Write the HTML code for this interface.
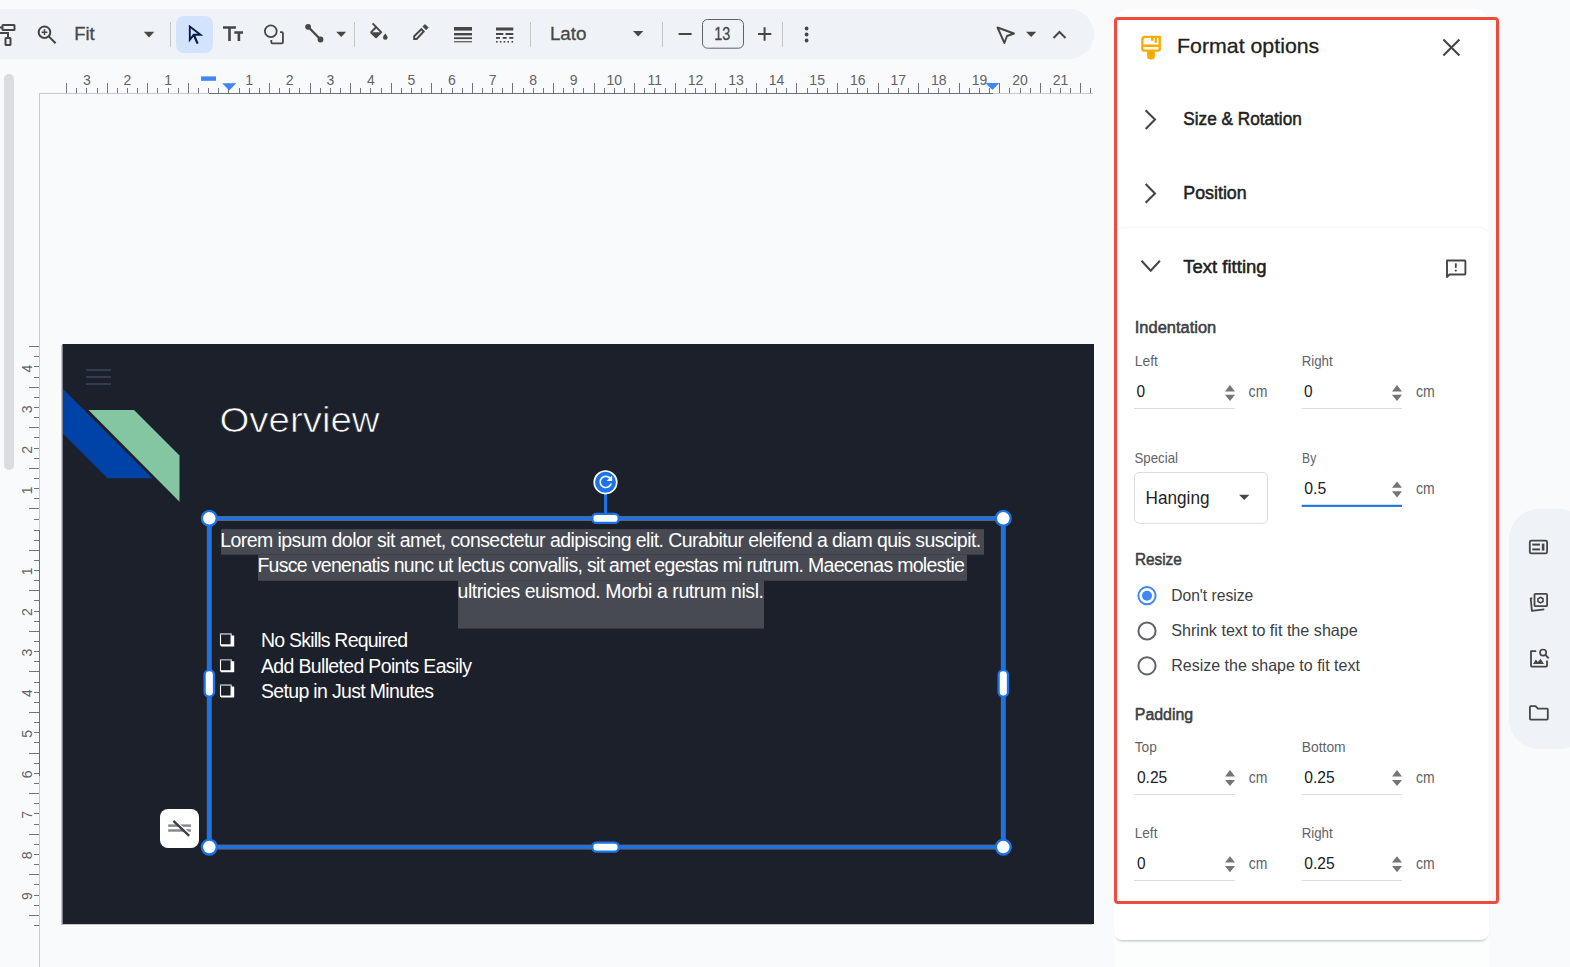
<!DOCTYPE html>
<html><head><meta charset="utf-8">
<style>
*{margin:0;padding:0;box-sizing:border-box}
html,body{width:1570px;height:967px;overflow:hidden;background:#f9fafc;font-family:"Liberation Sans",sans-serif}
.abs{position:absolute}
.t{position:absolute;white-space:nowrap;line-height:1}
</style></head><body>
<!-- toolbar -->
<div class="abs" style="left:-40px;top:9px;width:1134px;height:50px;border-radius:25px;background:#eff2f7"></div>
<div class="abs" style="left:176px;top:16px;width:37px;height:37px;border-radius:8px;background:#d3e3fd"></div>
<svg class="abs" style="left:0;top:0" width="1100" height="60" fill="none" stroke="#444746" stroke-width="2">
  <!-- paint format -->
  <rect x="2.5" y="25" width="12" height="5" rx="0.5"/>
  <path d="M2.5 27.5H0 M0 33H8V38"/>
  <rect x="5.5" y="38" width="5" height="7" rx="0.5"/>
  <!-- zoom -->
  <circle cx="44.5" cy="32.2" r="5.8"/>
  <path d="M48.7 36.4L55.6 43.3"/>
  <path d="M41.6 32.2h5.8M44.5 29.3v5.8" stroke-width="1.6"/>
  <!-- fit dropdown -->
  <path d="M143.8 31.7h10.5l-5.25 5.7z" fill="#444746" stroke="none"/>
  <rect x="170" y="22" width="1" height="25" fill="#c4c7c5" stroke="none"/>
  <!-- cursor -->
  <path d="M189.8 26.6L200.5 34.8h-6.8l-3.9 5z" stroke="#041e49" stroke-width="1.9" stroke-linejoin="miter"/>
  <path d="M194 35.2l3.6 8.4" stroke="#041e49" stroke-width="2.3"/>
  <!-- Tt -->
  <path d="M223 27.55h12.9M229.5 27.5v13.4M234.3 32.55h8.7M238.9 32.5v8.4" stroke-width="2.6"/>
  <!-- shape -->
  <circle cx="270.8" cy="31.3" r="5.9" stroke-width="1.8"/>
  <path d="M280 32.2h1.9a1 1 0 0 1 1 1v9.1a1 1 0 0 1-1 1h-9.6a1 1 0 0 1-1-1v-2.2" stroke-width="1.8"/>
  <!-- line -->
  <path d="M308.1 26.8L320.5 39.5" stroke-width="2.3"/>
  <circle cx="308.1" cy="26.8" r="2.9" fill="#444746" stroke="none"/>
  <circle cx="320.5" cy="39.5" r="2.9" fill="#444746" stroke="none"/>
  <path d="M336.2 31.7h10l-5 5.4z" fill="#444746" stroke="none"/>
  <rect x="354" y="22" width="1" height="25" fill="#c4c7c5" stroke="none"/>
  <!-- fill bucket -->
  <path d="M372.6 23.4L381.6 32.6" stroke-width="1.9"/>
  <path d="M370.9 32.4L376.6 26.8" stroke-width="1.9"/>
  <path d="M369.8 32.7Q369.7 32.5 370.6 32.2H382.4L377 37.8Q376.2 38.8 375.4 37.9z" fill="#444746" stroke="none"/>
  <path d="M385.3 33.6c-1.4 1.9-2.3 3-2.3 3.9a2.3 2.3 0 0 0 4.6 0c0-0.9-0.9-2-2.3-3.9z" fill="#444746" stroke="none"/>
  <!-- pencil -->
  <path d="M414.15 36.3L421.4 29.2l2.3 2.3-7 7.45h-2.55z" stroke-width="1.9" stroke-linejoin="miter"/>
  <path d="M422.9 26.5l2.2-2 3 3-2 2.3z" fill="#444746" stroke="#444746" stroke-width="0.8" stroke-linejoin="round"/>
  <!-- line weight -->
  <rect x="454" y="27" width="18" height="3.6" fill="#444746" stroke="none"/>
  <rect x="454" y="33" width="18" height="2.4" fill="#444746" stroke="none"/>
  <rect x="454" y="37.3" width="18" height="1.8" fill="#444746" stroke="none"/>
  <rect x="454" y="41.2" width="18" height="1.1" fill="#444746" stroke="none"/>
  <!-- line dash -->
  <g fill="#444746" stroke="none">
  <rect x="496" y="27.5" width="17.3" height="3"/>
  <rect x="496" y="33" width="7.3" height="2"/><rect x="505.5" y="33" width="7.8" height="2"/>
  <rect x="496" y="37" width="4" height="1.8"/><rect x="502.7" y="37" width="4" height="1.8"/><rect x="509.3" y="37" width="4" height="1.8"/>
  <rect x="496" y="41" width="1.6" height="1.6"/><rect x="499.8" y="41" width="1.6" height="1.6"/><rect x="503.6" y="41" width="1.6" height="1.6"/><rect x="507.4" y="41" width="1.6" height="1.6"/><rect x="511.5" y="41" width="1.6" height="1.6"/>
  </g>
  <rect x="530" y="22" width="1" height="25" fill="#c4c7c5" stroke="none"/>
  <path d="M633 31h10.3l-5.15 5.4z" fill="#444746" stroke="none"/>
  <rect x="662" y="22" width="1" height="25" fill="#c4c7c5" stroke="none"/>
  <path d="M678.6 34h13"/>
  <rect x="702.5" y="19.5" width="41" height="28.7" rx="5" stroke-width="1" stroke="#5f6368"/>
  <path d="M758 34h13.3M764.6 27.3v13.4"/>
  <rect x="782" y="22" width="1" height="25" fill="#c4c7c5" stroke="none"/>
  <g fill="#444746" stroke="none"><circle cx="806.6" cy="28.5" r="1.9"/><circle cx="806.6" cy="34.5" r="1.9"/><circle cx="806.6" cy="40.5" r="1.9"/></g>
  <!-- right pointer -->
  <path d="M997.5 27.5l16.5 6-7 2.5-2.6 7z" stroke-width="1.9" stroke-linejoin="round"/>
  <path d="M1026 31.8h10.3l-5.15 5.2z" fill="#444746" stroke="none"/>
  <path d="M1053.5 38l6-6 6 6" stroke-width="2"/>
</svg>
<svg class="abs" style="left:0;top:0" width="800" height="60" font-family="Liberation Sans" fill="#444746" stroke="#444746" stroke-width="0.3">
  <text x="74.2" y="39.9" font-size="18.9" textLength="20.5" lengthAdjust="spacingAndGlyphs">Fit</text>
  <text x="549.9" y="39.8" font-size="18.9" textLength="36.5" lengthAdjust="spacingAndGlyphs">Lato</text>
  <text x="714.3" y="40" font-size="18.9" textLength="16" lengthAdjust="spacingAndGlyphs">13</text>
</svg>

<!-- rulers -->
<svg class="abs" style="left:0;top:0" width="1100" height="100" font-family="Liberation Sans" font-size="14" fill="#5f6368"><rect x="39" y="93" width="1054" height="1" fill="#c7c9cc"/><rect x="209" y="93" width="784" height="1" fill="#6f7275"/><rect x="66" y="83" width="1" height="10" fill="#70757a"/><rect x="76" y="88" width="1" height="5" fill="#70757a"/><rect x="86" y="88" width="1" height="5" fill="#70757a"/><text x="86.89" y="85" text-anchor="middle">3</text><rect x="97" y="88" width="1" height="5" fill="#70757a"/><rect x="107" y="83" width="1" height="10" fill="#70757a"/><rect x="117" y="88" width="1" height="5" fill="#70757a"/><rect x="127" y="88" width="1" height="5" fill="#70757a"/><text x="127.46" y="85" text-anchor="middle">2</text><rect x="137" y="88" width="1" height="5" fill="#70757a"/><rect x="147" y="83" width="1" height="10" fill="#70757a"/><rect x="157" y="88" width="1" height="5" fill="#70757a"/><rect x="168" y="88" width="1" height="5" fill="#70757a"/><text x="168.03" y="85" text-anchor="middle">1</text><rect x="178" y="88" width="1" height="5" fill="#70757a"/><rect x="188" y="83" width="1" height="10" fill="#70757a"/><rect x="198" y="88" width="1" height="5" fill="#70757a"/><rect x="208" y="88" width="1" height="5" fill="#70757a"/><rect x="218" y="88" width="1" height="5" fill="#70757a"/><rect x="228" y="83" width="1" height="10" fill="#70757a"/><rect x="239" y="88" width="1" height="5" fill="#70757a"/><rect x="249" y="88" width="1" height="5" fill="#70757a"/><text x="249.17" y="85" text-anchor="middle">1</text><rect x="259" y="88" width="1" height="5" fill="#70757a"/><rect x="269" y="83" width="1" height="10" fill="#70757a"/><rect x="279" y="88" width="1" height="5" fill="#70757a"/><rect x="289" y="88" width="1" height="5" fill="#70757a"/><text x="289.74" y="85" text-anchor="middle">2</text><rect x="299" y="88" width="1" height="5" fill="#70757a"/><rect x="310" y="83" width="1" height="10" fill="#70757a"/><rect x="320" y="88" width="1" height="5" fill="#70757a"/><rect x="330" y="88" width="1" height="5" fill="#70757a"/><text x="330.31" y="85" text-anchor="middle">3</text><rect x="340" y="88" width="1" height="5" fill="#70757a"/><rect x="350" y="83" width="1" height="10" fill="#70757a"/><rect x="360" y="88" width="1" height="5" fill="#70757a"/><rect x="370" y="88" width="1" height="5" fill="#70757a"/><text x="370.88" y="85" text-anchor="middle">4</text><rect x="381" y="88" width="1" height="5" fill="#70757a"/><rect x="391" y="83" width="1" height="10" fill="#70757a"/><rect x="401" y="88" width="1" height="5" fill="#70757a"/><rect x="411" y="88" width="1" height="5" fill="#70757a"/><text x="411.45" y="85" text-anchor="middle">5</text><rect x="421" y="88" width="1" height="5" fill="#70757a"/><rect x="431" y="83" width="1" height="10" fill="#70757a"/><rect x="441" y="88" width="1" height="5" fill="#70757a"/><rect x="452" y="88" width="1" height="5" fill="#70757a"/><text x="452.02" y="85" text-anchor="middle">6</text><rect x="462" y="88" width="1" height="5" fill="#70757a"/><rect x="472" y="83" width="1" height="10" fill="#70757a"/><rect x="482" y="88" width="1" height="5" fill="#70757a"/><rect x="492" y="88" width="1" height="5" fill="#70757a"/><text x="492.59" y="85" text-anchor="middle">7</text><rect x="502" y="88" width="1" height="5" fill="#70757a"/><rect x="512" y="83" width="1" height="10" fill="#70757a"/><rect x="523" y="88" width="1" height="5" fill="#70757a"/><rect x="533" y="88" width="1" height="5" fill="#70757a"/><text x="533.16" y="85" text-anchor="middle">8</text><rect x="543" y="88" width="1" height="5" fill="#70757a"/><rect x="553" y="83" width="1" height="10" fill="#70757a"/><rect x="563" y="88" width="1" height="5" fill="#70757a"/><rect x="573" y="88" width="1" height="5" fill="#70757a"/><text x="573.73" y="85" text-anchor="middle">9</text><rect x="583" y="88" width="1" height="5" fill="#70757a"/><rect x="594" y="83" width="1" height="10" fill="#70757a"/><rect x="604" y="88" width="1" height="5" fill="#70757a"/><rect x="614" y="88" width="1" height="5" fill="#70757a"/><text x="614.30" y="85" text-anchor="middle">10</text><rect x="624" y="88" width="1" height="5" fill="#70757a"/><rect x="634" y="83" width="1" height="10" fill="#70757a"/><rect x="644" y="88" width="1" height="5" fill="#70757a"/><rect x="654" y="88" width="1" height="5" fill="#70757a"/><text x="654.87" y="85" text-anchor="middle">11</text><rect x="665" y="88" width="1" height="5" fill="#70757a"/><rect x="675" y="83" width="1" height="10" fill="#70757a"/><rect x="685" y="88" width="1" height="5" fill="#70757a"/><rect x="695" y="88" width="1" height="5" fill="#70757a"/><text x="695.44" y="85" text-anchor="middle">12</text><rect x="705" y="88" width="1" height="5" fill="#70757a"/><rect x="715" y="83" width="1" height="10" fill="#70757a"/><rect x="725" y="88" width="1" height="5" fill="#70757a"/><rect x="736" y="88" width="1" height="5" fill="#70757a"/><text x="736.01" y="85" text-anchor="middle">13</text><rect x="746" y="88" width="1" height="5" fill="#70757a"/><rect x="756" y="83" width="1" height="10" fill="#70757a"/><rect x="766" y="88" width="1" height="5" fill="#70757a"/><rect x="776" y="88" width="1" height="5" fill="#70757a"/><text x="776.58" y="85" text-anchor="middle">14</text><rect x="786" y="88" width="1" height="5" fill="#70757a"/><rect x="796" y="83" width="1" height="10" fill="#70757a"/><rect x="807" y="88" width="1" height="5" fill="#70757a"/><rect x="817" y="88" width="1" height="5" fill="#70757a"/><text x="817.15" y="85" text-anchor="middle">15</text><rect x="827" y="88" width="1" height="5" fill="#70757a"/><rect x="837" y="83" width="1" height="10" fill="#70757a"/><rect x="847" y="88" width="1" height="5" fill="#70757a"/><rect x="857" y="88" width="1" height="5" fill="#70757a"/><text x="857.72" y="85" text-anchor="middle">16</text><rect x="867" y="88" width="1" height="5" fill="#70757a"/><rect x="878" y="83" width="1" height="10" fill="#70757a"/><rect x="888" y="88" width="1" height="5" fill="#70757a"/><rect x="898" y="88" width="1" height="5" fill="#70757a"/><text x="898.29" y="85" text-anchor="middle">17</text><rect x="908" y="88" width="1" height="5" fill="#70757a"/><rect x="918" y="83" width="1" height="10" fill="#70757a"/><rect x="928" y="88" width="1" height="5" fill="#70757a"/><rect x="938" y="88" width="1" height="5" fill="#70757a"/><text x="938.86" y="85" text-anchor="middle">18</text><rect x="949" y="88" width="1" height="5" fill="#70757a"/><rect x="959" y="83" width="1" height="10" fill="#70757a"/><rect x="969" y="88" width="1" height="5" fill="#70757a"/><rect x="979" y="88" width="1" height="5" fill="#70757a"/><text x="979.43" y="85" text-anchor="middle">19</text><rect x="989" y="88" width="1" height="5" fill="#70757a"/><rect x="999" y="83" width="1" height="10" fill="#70757a"/><rect x="1009" y="88" width="1" height="5" fill="#70757a"/><rect x="1020" y="88" width="1" height="5" fill="#70757a"/><text x="1020.00" y="85" text-anchor="middle">20</text><rect x="1030" y="88" width="1" height="5" fill="#70757a"/><rect x="1040" y="83" width="1" height="10" fill="#70757a"/><rect x="1050" y="88" width="1" height="5" fill="#70757a"/><rect x="1060" y="88" width="1" height="5" fill="#70757a"/><text x="1060.57" y="85" text-anchor="middle">21</text><rect x="1070" y="88" width="1" height="5" fill="#70757a"/><rect x="1080" y="83" width="1" height="10" fill="#70757a"/><rect x="1090" y="88" width="1" height="5" fill="#70757a"/></svg>
<svg class="abs" style="left:0;top:0" width="60" height="967" font-family="Liberation Sans" font-size="14" fill="#5f6368"><rect x="39" y="94" width="1" height="873" fill="#c7c9cc"/><rect x="39" y="530" width="1" height="246" fill="#6f7275"/><rect x="34" y="530" width="5" height="1" fill="#70757a"/><rect x="34" y="519" width="5" height="1" fill="#70757a"/><rect x="29" y="508" width="10" height="1" fill="#70757a"/><rect x="34" y="498" width="5" height="1" fill="#70757a"/><rect x="34" y="488" width="5" height="1" fill="#70757a"/><text x="0" y="0" transform="translate(32 490.43) rotate(-90)" text-anchor="middle">1</text><rect x="34" y="478" width="5" height="1" fill="#70757a"/><rect x="29" y="468" width="10" height="1" fill="#70757a"/><rect x="34" y="458" width="5" height="1" fill="#70757a"/><rect x="34" y="448" width="5" height="1" fill="#70757a"/><text x="0" y="0" transform="translate(32 449.86) rotate(-90)" text-anchor="middle">2</text><rect x="34" y="437" width="5" height="1" fill="#70757a"/><rect x="29" y="427" width="10" height="1" fill="#70757a"/><rect x="34" y="417" width="5" height="1" fill="#70757a"/><rect x="34" y="407" width="5" height="1" fill="#70757a"/><text x="0" y="0" transform="translate(32 409.29) rotate(-90)" text-anchor="middle">3</text><rect x="34" y="397" width="5" height="1" fill="#70757a"/><rect x="29" y="387" width="10" height="1" fill="#70757a"/><rect x="34" y="377" width="5" height="1" fill="#70757a"/><rect x="34" y="366" width="5" height="1" fill="#70757a"/><text x="0" y="0" transform="translate(32 368.72) rotate(-90)" text-anchor="middle">4</text><rect x="34" y="356" width="5" height="1" fill="#70757a"/><rect x="29" y="346" width="10" height="1" fill="#70757a"/><rect x="34" y="540" width="5" height="1" fill="#70757a"/><rect x="29" y="550" width="10" height="1" fill="#70757a"/><rect x="34" y="560" width="5" height="1" fill="#70757a"/><rect x="34" y="570" width="5" height="1" fill="#70757a"/><text x="0" y="0" transform="translate(32 571.47) rotate(-90)" text-anchor="middle">1</text><rect x="34" y="580" width="5" height="1" fill="#70757a"/><rect x="29" y="590" width="10" height="1" fill="#70757a"/><rect x="34" y="600" width="5" height="1" fill="#70757a"/><rect x="34" y="611" width="5" height="1" fill="#70757a"/><text x="0" y="0" transform="translate(32 612.04) rotate(-90)" text-anchor="middle">2</text><rect x="34" y="621" width="5" height="1" fill="#70757a"/><rect x="29" y="631" width="10" height="1" fill="#70757a"/><rect x="34" y="641" width="5" height="1" fill="#70757a"/><rect x="34" y="651" width="5" height="1" fill="#70757a"/><text x="0" y="0" transform="translate(32 652.61) rotate(-90)" text-anchor="middle">3</text><rect x="34" y="661" width="5" height="1" fill="#70757a"/><rect x="29" y="671" width="10" height="1" fill="#70757a"/><rect x="34" y="682" width="5" height="1" fill="#70757a"/><rect x="34" y="692" width="5" height="1" fill="#70757a"/><text x="0" y="0" transform="translate(32 693.18) rotate(-90)" text-anchor="middle">4</text><rect x="34" y="702" width="5" height="1" fill="#70757a"/><rect x="29" y="712" width="10" height="1" fill="#70757a"/><rect x="34" y="722" width="5" height="1" fill="#70757a"/><rect x="34" y="732" width="5" height="1" fill="#70757a"/><text x="0" y="0" transform="translate(32 733.75) rotate(-90)" text-anchor="middle">5</text><rect x="34" y="742" width="5" height="1" fill="#70757a"/><rect x="29" y="753" width="10" height="1" fill="#70757a"/><rect x="34" y="763" width="5" height="1" fill="#70757a"/><rect x="34" y="773" width="5" height="1" fill="#70757a"/><text x="0" y="0" transform="translate(32 774.32) rotate(-90)" text-anchor="middle">6</text><rect x="34" y="783" width="5" height="1" fill="#70757a"/><rect x="29" y="793" width="10" height="1" fill="#70757a"/><rect x="34" y="803" width="5" height="1" fill="#70757a"/><rect x="34" y="813" width="5" height="1" fill="#70757a"/><text x="0" y="0" transform="translate(32 814.89) rotate(-90)" text-anchor="middle">7</text><rect x="34" y="824" width="5" height="1" fill="#70757a"/><rect x="29" y="834" width="10" height="1" fill="#70757a"/><rect x="34" y="844" width="5" height="1" fill="#70757a"/><rect x="34" y="854" width="5" height="1" fill="#70757a"/><text x="0" y="0" transform="translate(32 855.46) rotate(-90)" text-anchor="middle">8</text><rect x="34" y="864" width="5" height="1" fill="#70757a"/><rect x="29" y="874" width="10" height="1" fill="#70757a"/><rect x="34" y="884" width="5" height="1" fill="#70757a"/><rect x="34" y="895" width="5" height="1" fill="#70757a"/><text x="0" y="0" transform="translate(32 896.03) rotate(-90)" text-anchor="middle">9</text><rect x="34" y="905" width="5" height="1" fill="#70757a"/><rect x="29" y="915" width="10" height="1" fill="#70757a"/><rect x="34" y="925" width="5" height="1" fill="#70757a"/></svg>
<div class="abs" style="left:4px;top:74px;width:10px;height:396px;border-radius:5px;background:#dadce0"></div>

<!-- slide -->
<div class="abs" style="left:63px;top:344px;width:1031px;height:580px;background:#1c202b;box-shadow:-1px 0 0 #7d828a, -2px 1px 0 #c2c5c9"></div>
<svg class="abs" style="left:0;top:0" width="1100" height="967">
  <g fill="#343c50"><rect x="86" y="369" width="25" height="2"/><rect x="86" y="376" width="25" height="2"/><rect x="86" y="383" width="25" height="2"/></g>
  <polygon points="63,389 152.5,478.3 107.5,478.3 63,433.8" fill="#0043a8"/>
  <polygon points="88.5,410 134,410 179.5,455.5 179.5,501.7" fill="#84c6a2"/>
  <text x="219.5" y="432.3" font-family="Liberation Sans" font-size="35.6" fill="#ffffff" stroke="#1c202b" stroke-width="0.7" textLength="160" lengthAdjust="spacingAndGlyphs">Overview</text>
  <!-- highlights -->
  <g fill="#474a52">
    <rect x="221" y="529.1" width="763" height="25.6"/>
    <rect x="258" y="554.7" width="709" height="26.1"/>
    <rect x="458" y="580.8" width="306" height="47.8"/>
  </g>
  <g font-family="Liberation Sans" font-size="19.5" fill="#ffffff" lengthAdjust="spacingAndGlyphs">
    <text x="220.2" y="546.8" textLength="761">Lorem ipsum dolor sit amet, consectetur adipiscing elit. Curabitur eleifend a diam quis suscipit.</text>
    <text x="257.4" y="572.4" textLength="707.5">Fusce venenatis nunc ut lectus convallis, sit amet egestas mi rutrum. Maecenas molestie</text>
    <text x="457.5" y="597.8" textLength="306.5">ultricies euismod. Morbi a rutrum nisl.</text>
    <text x="261" y="647" textLength="147">No Skills Required</text>
    <text x="261" y="672.6" textLength="211">Add Bulleted Points Easily</text>
    <text x="261" y="698.1" textLength="173">Setup in Just Minutes</text>
  </g>
  <!-- bullets -->
  <rect x="220.5" y="633.9" width="10.6" height="11.2" fill="none" stroke="#ffffff" stroke-width="1.1"/>
  <rect x="220" y="633.4" width="11.2" height="1.1" fill="#8a8d94"/>
  <path d="M231.1 635.4H234.2V646.4H221V644.6H231.1z" fill="#ffffff"/>
  <rect x="220.5" y="659.7" width="10.6" height="11.2" fill="none" stroke="#ffffff" stroke-width="1.1"/>
  <rect x="220" y="659.2" width="11.2" height="1.1" fill="#8a8d94"/>
  <path d="M231.1 661.2H234.2V672.2H221V670.4H231.1z" fill="#ffffff"/>
  <rect x="220.5" y="685.1" width="10.6" height="11.2" fill="none" stroke="#ffffff" stroke-width="1.1"/>
  <rect x="220" y="684.6" width="11.2" height="1.1" fill="#8a8d94"/>
  <path d="M231.1 686.6H234.2V697.6H221V695.8H231.1z" fill="#ffffff"/>
  <!-- selection box -->
  <g fill="none" stroke="rgba(140,160,200,0.55)" stroke-width="5">
    <rect x="209.3" y="518.5" width="794" height="328.6"/>
  </g>
  <g fill="none" stroke="#1b73e8" stroke-width="3">
    <rect x="209.3" y="518.5" width="794" height="328.6"/>
    <path d="M605.5 493.5v25"/>
  </g>
  <g fill="#ffffff" stroke="#1b73e8" stroke-width="2.3">
    <circle cx="209.3" cy="518.3" r="7.4"/>
    <circle cx="1003.3" cy="518.3" r="7.4"/>
    <circle cx="209.3" cy="847.1" r="7.4"/>
    <circle cx="1003.3" cy="847.1" r="7.4"/>
    <rect x="592.3" y="513.9" width="26.4" height="9" rx="4"/>
    <rect x="592.3" y="842.6" width="26.4" height="9" rx="4"/>
    <rect x="204.6" y="670.2" width="9.4" height="26.4" rx="4.5"/>
    <rect x="998.6" y="670.2" width="9.4" height="26.4" rx="4.5"/>
  </g>
  <circle cx="605.5" cy="482.3" r="11.3" fill="#1b73e8" stroke="#ffffff" stroke-width="1.6"/>
  <path transform="translate(596.32 472.42) scale(0.79)" d="M17.65 6.35C16.2 4.9 14.21 4 12 4c-4.42 0-7.99 3.58-7.99 8s3.57 8 7.99 8c3.73 0 6.84-2.55 7.73-6h-2.08c-.82 2.33-3.04 4-5.65 4-3.31 0-6-2.69-6-6s2.69-6 6-6c1.66 0 3.14.69 4.22 1.78L13 11h7V4l-2.35 2.35z" fill="#ffffff"/>
  <!-- small button -->
  <rect x="160" y="809" width="39" height="39" rx="8" fill="#ffffff"/>
  <g fill="#80868b"><rect x="168.2" y="824.4" width="22.7" height="2.4"/><rect x="168.2" y="829.3" width="22.7" height="2.4"/></g>
  <path d="M175 821.3L191.5 836.3" stroke="#ffffff" stroke-width="2.6"/>
  <path d="M173.4 820.9L189.2 835.9" stroke="#3c4043" stroke-width="2.4"/>
  <!-- ruler markers -->
  <rect x="201" y="76.4" width="15" height="4.4" fill="#4285f4"/>
  <path d="M222.2 83.3h14l-7 7.2z" fill="#4285f4"/>
  <path d="M985.4 83h14l-7 7z" fill="#4285f4"/>
</svg>
<!-- side panel -->
<div class="abs" style="left:1114px;top:9px;width:375px;height:970px;border-radius:16px 16px 0 0;background:#fcfdfd"></div>
<div class="abs" style="left:1114px;top:9px;width:375px;height:240px;border-radius:16px 16px 0 0;background:#ffffff"></div>
<div class="abs" style="left:1114px;top:228px;width:375px;height:712px;border-radius:8px;background:#ffffff;box-shadow:0 -1px 1.5px -1px rgba(60,64,67,0.25), 0 2.5px 2.5px -2px rgba(60,64,67,0.35)"></div>
<div class="abs" style="left:1114px;top:17px;width:385px;height:887px;border:3px solid #ee4b3d;border-radius:4px"></div>
<!-- side rail -->
<div class="abs" style="left:1509px;top:509px;width:80px;height:240px;border-radius:30px;background:#eff2f7"></div>
<svg class="abs" style="left:1100;top:0;left:1100px" width="470" height="967" fill="none" stroke="#444746" stroke-width="2">
  <!-- brush icon -->
  <path d="M41.2 39.6a3.8 3.8 0 0 1 3.8-3.8H60.9V49.6a2.1 2.1 0 0 1-2.1 2.1H43.3a2.1 2.1 0 0 1-2.1-2.1z" fill="#f9ab00" stroke="none"/>
  <path d="M43.5 40.2a2.1 2.1 0 0 1 2.1-2.1H58.5V44.4H43.5z" fill="#ffffff" stroke="none"/>
  <rect x="43.5" y="47" width="15" height="2.5" fill="#ffffff" stroke="none"/>
  <rect x="51.1" y="37.8" width="2.4" height="3" fill="#f9ab00" stroke="none"/>
  <rect x="54.7" y="37.8" width="2.2" height="5" fill="#f9ab00" stroke="none"/>
  <path d="M47.1 51h7.8v5.2a3.3 3.3 0 0 1-3.3 3.3h-1.2a3.3 3.3 0 0 1-3.3-3.3z" fill="#f9ab00" stroke="none"/>
  <!-- close -->
  <path d="M343.4 39.4l16 16M359.4 39.4l-16 16" stroke-width="2.1"/>
  <!-- chevrons -->
  <path d="M45.6 110.2l9.4 9.4-9.4 9.4" stroke-width="2.1"/>
  <path d="M45.6 184l9.4 9.4-9.4 9.4" stroke-width="2.1"/>
  <path d="M41.5 260.8l9.2 9.9 9.2-9.9" stroke-width="2.1"/>
  <!-- feedback icon -->
  <path d="M347 260.5h17.6a0.8 0.8 0 0 1 0.8 0.8v12.4a0.8 0.8 0 0 1-0.8 0.8h-15.2l-2.4 2.6z" stroke-width="1.9" stroke-linejoin="round"/>
  <path d="M355.8 263.3v4.6" stroke-width="1.8"/>
  <circle cx="355.8" cy="270.6" r="1.1" fill="#444746" stroke="none"/>
  <!-- spinners -->
  <g fill="#757575" stroke="none">
    <path d="M125 391.4l5-6.4 5 6.4z M125 394.8h10l-5 6.2z"/>
    <path d="M292 391.4l5-6.4 5 6.4z M292 394.8h10l-5 6.2z"/>
    <path d="M292 487.8l5-6.4 5 6.4z M292 491.2h10l-5 6.2z"/>
    <path d="M125 776.5l5-6.4 5 6.4z M125 779.9h10l-5 6.2z"/>
    <path d="M292 776.5l5-6.4 5 6.4z M292 779.9h10l-5 6.2z"/>
    <path d="M125 862.6l5-6.4 5 6.4z M125 866h10l-5 6.2z"/>
    <path d="M292 862.6l5-6.4 5 6.4z M292 866h10l-5 6.2z"/>
  </g>
  <!-- underlines -->
  <g fill="#dadce0" stroke="none">
    <rect x="34" y="408" width="101" height="1"/>
    <rect x="201.7" y="408" width="100.3" height="1"/>
    <rect x="34" y="794" width="101" height="1"/>
    <rect x="201.7" y="794" width="100.3" height="1"/>
    <rect x="34" y="880" width="101" height="1"/>
    <rect x="201.7" y="880" width="100.3" height="1"/>
  </g>
  <rect x="201.7" y="504.8" width="100.3" height="2.1" fill="#1a73e8" stroke="none"/>
  <!-- dropdown -->
  <rect x="34.5" y="472.5" width="133" height="50.8" rx="4.5" stroke="#dadce0" stroke-width="1"/>
  <path d="M139 494.7h10.5l-5.25 5.3z" fill="#444746" stroke="none"/>
  <!-- radios -->
  <circle cx="47" cy="595.7" r="8.6" stroke="#4285f4" stroke-width="2"/>
  <circle cx="47" cy="595.7" r="5" fill="#4285f4" stroke="none"/>
  <circle cx="47" cy="631" r="8.6" stroke="#5f6368" stroke-width="2"/>
  <circle cx="47" cy="665.8" r="8.6" stroke="#5f6368" stroke-width="2"/>
  <!-- side rail icons -->
  <g stroke-width="1.8" stroke="#444746">
    <rect x="429.8" y="540.7" width="17.3" height="12.7" rx="1.5"/>
    <g fill="#444746" stroke="none"><rect x="432.3" y="543.6" width="7.7" height="2"/><rect x="432.3" y="548.4" width="7.7" height="2"/><rect x="441.8" y="543.6" width="2.6" height="7"/></g>
    <rect x="434.5" y="593.8" width="12.6" height="12.4" rx="1"/>
    <path d="M440.5 597.3l2.5 1.4v2.8l-2.5 1.4-2.5-1.4v-2.8z" stroke-width="1.6"/>
    <path d="M432.3 598.3h-1.6l1.2 12.6 12.4-1.5" stroke-linejoin="round"/>
    <path d="M436.3 651.2h-5.3v14.6a0.9 0.9 0 0 0 0.9 0.9h14.2a0.9 0.9 0 0 0 0.9-0.9v-5.3" stroke-linejoin="round"/>
    <circle cx="443.1" cy="652.6" r="3.1" stroke-width="1.7"/>
    <path d="M445.4 654.9l3.3 3.4" stroke-width="1.9"/>
    <path d="M433.1 663.9l2.8-4.4 2 2.6 2.6-3.4 3.5 5.2z" fill="#444746" stroke="none"/>
    <path d="M429.9 707a0.9 0.9 0 0 1 0.9-0.9h4.7l2.4 2.6h9a0.9 0.9 0 0 1 0.9 0.9v9.1a0.9 0.9 0 0 1-0.9 0.9h-16.1a0.9 0.9 0 0 1-0.9-0.9z" stroke-linejoin="round"/>
  </g>
</svg>
<svg class="abs" style="left:0;top:0" width="1570" height="967" font-family="Liberation Sans" lengthAdjust="spacingAndGlyphs">
  <text x="1177" y="52.9" font-size="20.8" fill="#1f1f1f" stroke="#1f1f1f" stroke-width="0.3" textLength="142.3" lengthAdjust="spacingAndGlyphs">Format options</text>
  <g font-size="18.75" fill="#1f1f1f" stroke="#1f1f1f" stroke-width="0.55">
    <text x="1183.3" y="125.2" textLength="118.5" lengthAdjust="spacingAndGlyphs">Size &amp; Rotation</text>
    <text x="1183.3" y="199" textLength="63.4" lengthAdjust="spacingAndGlyphs">Position</text>
    <text x="1183.3" y="273" textLength="83.3" lengthAdjust="spacingAndGlyphs">Text fitting</text>
  </g>
  <g font-size="17.4" fill="#3c4043" stroke="#3c4043" stroke-width="0.55">
    <text x="1134.8" y="333.1" textLength="81.4" lengthAdjust="spacingAndGlyphs">Indentation</text>
    <text x="1134.9" y="564.7" textLength="46.9" lengthAdjust="spacingAndGlyphs">Resize</text>
    <text x="1134.8" y="719.6" textLength="58.4" lengthAdjust="spacingAndGlyphs">Padding</text>
  </g>
  <g font-size="14.6" fill="#5f6368">
    <text x="1134.8" y="366" textLength="23.1" lengthAdjust="spacingAndGlyphs">Left</text>
    <text x="1301.7" y="366" textLength="31" lengthAdjust="spacingAndGlyphs">Right</text>
    <text x="1134.5" y="463" textLength="43.5" lengthAdjust="spacingAndGlyphs">Special</text>
    <text x="1302.1" y="463" textLength="14.1" lengthAdjust="spacingAndGlyphs">By</text>
    <text x="1134.8" y="752" textLength="22" lengthAdjust="spacingAndGlyphs">Top</text>
    <text x="1301.7" y="752" textLength="44" lengthAdjust="spacingAndGlyphs">Bottom</text>
    <text x="1134.8" y="837.5" textLength="22.6" lengthAdjust="spacingAndGlyphs">Left</text>
    <text x="1301.7" y="837.5" textLength="31" lengthAdjust="spacingAndGlyphs">Right</text>
  </g>
  <g font-size="16.2" fill="#5f6368">
    <text x="1248.6" y="397" textLength="18.8" lengthAdjust="spacingAndGlyphs">cm</text>
    <text x="1415.9" y="397" textLength="18.8" lengthAdjust="spacingAndGlyphs">cm</text>
    <text x="1416" y="493.8" textLength="18.6" lengthAdjust="spacingAndGlyphs">cm</text>
    <text x="1248.8" y="782.9" textLength="18.6" lengthAdjust="spacingAndGlyphs">cm</text>
    <text x="1416" y="782.9" textLength="18.6" lengthAdjust="spacingAndGlyphs">cm</text>
    <text x="1248.8" y="869" textLength="18.6" lengthAdjust="spacingAndGlyphs">cm</text>
    <text x="1416" y="869" textLength="18.6" lengthAdjust="spacingAndGlyphs">cm</text>
  </g>
  <g font-size="17" fill="#202124">
    <text x="1136.6" y="397" textLength="8.6" lengthAdjust="spacingAndGlyphs">0</text>
    <text x="1303.9" y="397" textLength="8.6" lengthAdjust="spacingAndGlyphs">0</text>
    <text x="1304.3" y="493.8" textLength="22" lengthAdjust="spacingAndGlyphs">0.5</text>
    <text x="1136.9" y="782.9" textLength="30.4" lengthAdjust="spacingAndGlyphs">0.25</text>
    <text x="1304.3" y="782.9" textLength="30.4" lengthAdjust="spacingAndGlyphs">0.25</text>
    <text x="1136.9" y="869" textLength="8.6" lengthAdjust="spacingAndGlyphs">0</text>
    <text x="1304.3" y="869" textLength="30.4" lengthAdjust="spacingAndGlyphs">0.25</text>
  </g>
  <text x="1145.6" y="503.9" font-size="18.9" fill="#1f1f1f" textLength="63.9" lengthAdjust="spacingAndGlyphs">Hanging</text>
  <g font-size="16.5" fill="#3c4043">
    <text x="1171.2" y="600.8" textLength="82" lengthAdjust="spacingAndGlyphs">Don't resize</text>
    <text x="1171.2" y="635.5" textLength="186.6" lengthAdjust="spacingAndGlyphs">Shrink text to fit the shape</text>
    <text x="1171.2" y="670.6" textLength="188.7" lengthAdjust="spacingAndGlyphs">Resize the shape to fit text</text>
  </g>
</svg>
</body></html>
